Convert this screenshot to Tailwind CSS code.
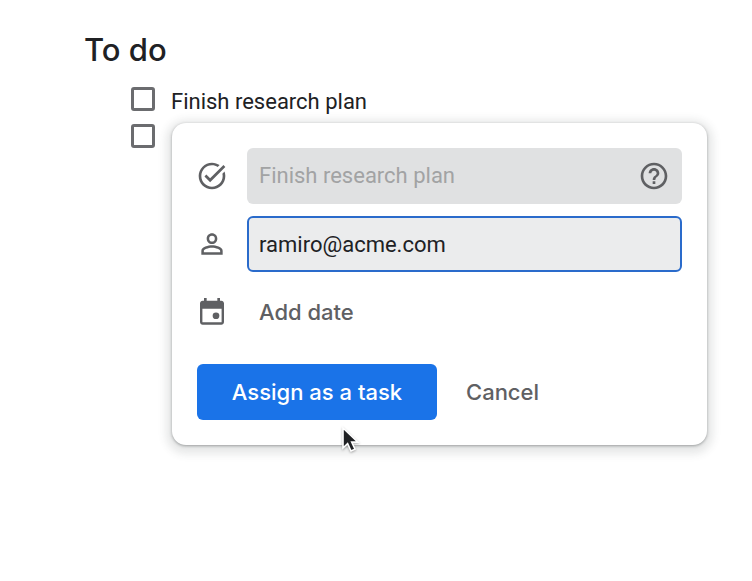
<!DOCTYPE html>
<html lang="en">
<head>
<meta charset="utf-8">
<meta name="viewport" content="width=device-width, initial-scale=1">
<title>To do</title>
<script src="https://cdn.jsdelivr.net/npm/@tailwindcss/browser@4"></script>
</head>
<body class="min-h-screen bg-white font-['Roboto',sans-serif] text-[22px] leading-7 text-[#202124]">
<main class="pt-7 pr-[45px] pl-[84px]">
  <h1 class="font-['Inter',sans-serif] text-[31px] leading-11 font-medium">To do</h1>
  <ul class="mt-[15px] pl-[47px]">
    <li class="flex h-[37px] items-start gap-4">
      <input id="task-1" type="checkbox" class="size-6 shrink-0 appearance-none rounded-[3px] border-[3px] border-[#6b6c6f] bg-white">
      <label for="task-1" class="leading-[30px]">Finish research plan</label>
    </li>
    <li class="relative flex items-start">
      <input type="checkbox" aria-label="New task" class="size-6 shrink-0 appearance-none rounded-[3px] border-[3px] border-[#6b6c6f] bg-white">
      <form class="absolute -top-px right-0 left-[41px] flex flex-col gap-3 rounded-[14px] bg-white p-[25px] shadow-[0_1px_3px_rgba(60,64,67,0.45),0_3px_8px_6px_rgba(60,64,67,0.12)]">
        <div class="flex items-center gap-5">
          <label for="title" aria-label="Task" class="flex w-[30px] shrink-0 justify-center text-[#5f6063]">
            <svg class="size-8 shrink-0" viewBox="0 0 24 24" fill="currentColor"><path d="M22 5.18 10.59 16.6l-4.24-4.24 1.41-1.41 2.83 2.83 10-10L22 5.18zM19.79 10.22c.13.57.21 1.17.21 1.78 0 4.42-3.58 8-8 8s-8-3.58-8-8 3.58-8 8-8c1.58 0 3.04.46 4.28 1.25l1.44-1.44C16.1 2.67 14.13 2 12 2 6.48 2 2 6.48 2 12s4.48 10 10 10 10-4.48 10-10c0-1.19-.22-2.33-.6-3.39l-1.61 1.61z"/></svg>
          </label>
          <div class="flex h-14 min-w-0 flex-1 items-center rounded-md bg-[#e0e1e2] px-3">
            <input id="title" type="text" placeholder="Finish research plan" class="min-w-0 flex-1 bg-transparent outline-none placeholder:text-[#a2a3a4]">
            <button type="button" aria-label="Help" class="text-[#5f6063]">
              <svg class="size-8" viewBox="0 0 24 24" fill="currentColor"><path d="M11 18h2v-2h-2v2zm1-16C6.48 2 2 6.48 2 12s4.48 10 10 10 10-4.48 10-10S17.52 2 12 2zm0 18c-4.41 0-8-3.59-8-8s3.59-8 8-8 8 3.59 8 8-3.59 8-8 8zm0-14c-2.21 0-4 1.79-4 4h2c0-1.1.9-2 2-2s2 .9 2 2c0 2-3 1.75-3 5h2c0-2.25 3-2.5 3-5 0-2.21-1.79-4-4-4z"/></svg>
            </button>
          </div>
        </div>
        <div class="flex items-center gap-5">
          <label for="assignee" aria-label="Assignee" class="flex w-[30px] shrink-0 justify-center text-[#5f6063]">
            <svg class="size-8 shrink-0" viewBox="0 0 24 24" fill="currentColor"><path d="M12 5.9a2.1 2.1 0 1 1 0 4.2 2.1 2.1 0 0 1 0-4.2m0 9c2.97 0 6.1 1.46 6.1 2.1v1.1H5.9V17c0-.64 3.13-2.1 6.1-2.1M12 4C9.79 4 8 5.79 8 8s1.79 4 4 4 4-1.79 4-4-1.79-4-4-4zm0 9c-2.67 0-8 1.34-8 4v3h16v-3c0-2.66-5.33-4-8-4z"/></svg>
          </label>
          <input id="assignee" type="email" value="ramiro@acme.com" class="h-14 min-w-0 flex-1 rounded-md border-2 border-[#2a6bcb] bg-[#ebeced] px-[10px] outline-none">
        </div>
        <button type="button" class="flex h-14 items-center gap-8 text-left font-['Inter',sans-serif] font-medium text-[#5f6063]">
          <span class="flex w-[30px] shrink-0 justify-center">
            <svg class="size-8 shrink-0" viewBox="0 0 24 24" fill="currentColor"><path d="M19 3.5h-1V1.5h-2v2H8v-2H6v2H5c-1.1 0-2 .9-2 2v14c0 1.1.9 2 2 2h14c1.1 0 2-.9 2-2v-14c0-1.1-.9-2-2-2zm.2 16.200H4.800V9.500h14.400v10.200z"/><circle cx="15" cy="14.800" r="2.500"/></svg>
          </span>
          <span>Add date</span>
        </button>
        <div class="mt-3 flex gap-[13px] font-['Inter',sans-serif] font-medium">
          <button type="submit" class="h-14 w-60 rounded-md bg-[#1a73e8] text-white">Assign as a task</button>
          <button type="button" class="h-14 px-4 text-[#5f6063]">Cancel</button>
        </div>
        <svg class="pointer-events-none absolute right-[347px] bottom-[-9px] h-[29px] w-[20px] drop-shadow-[0_1px_1px_rgba(0,0,0,0.3)]" viewBox="0 0 20 29"><path d="M3 3v20l4.600-4.300L11 26l4-1.800-3.300-7.100h6.200z" fill="#202124" stroke="#fff" stroke-width="1.600"/></svg>
      </form>
    </li>
  </ul>
</main>
</body>
</html>
